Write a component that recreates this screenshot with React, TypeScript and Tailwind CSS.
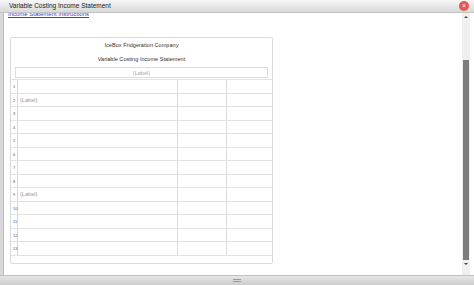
const rows = Array.from({ length: 13 }, (_, i) => ({
  n: i + 1,
  label: i === 1 || i === 8 ? "(Label)" : "",
}));

function Row({ n, label }: { n: number; label: string }) {
  return (
    <div className="flex h-[13.5px] border-b border-[#e2e2e2]">
      <div className="w-[7px] border-r border-[#d6d6d6] text-[4px] leading-[13px] text-[#555] pl-[2px]">{n}</div>
      <div className="w-[160px] border-r border-[#dcdcdc] text-[5.6px] leading-[13px] text-[#9a9a9a] pl-[2px]">{label}</div>
      <div className="w-[49px] border-r border-[#dcdcdc]"></div>
      <div className="w-[46px]"></div>
    </div>
  );
}

export default function App() {
  return (
    <div className="w-[474px] h-[285px] flex flex-col bg-white overflow-hidden font-['Liberation_Sans',Arial,sans-serif]">
      <div className="relative z-10 h-[13px] flex items-center justify-between bg-gradient-to-b from-[#f7f7f7] to-[#d9d9d9] border-b border-[#c4c4c4] pl-[9px] pr-[5px]">
        <span className="text-[6.5px] text-[#222]">Variable Costing Income Statement</span>
        <span className="w-[10px] h-[10px] rounded-full bg-[#e25a4c] text-white text-[7px] leading-[10px] text-center">×</span>
      </div>
      <div className="flex-1 flex min-h-0">
        <div className="w-[4px] bg-[#d8d8d8] border-r border-[#bdbdbd]"></div>
        <div className="flex-1 overflow-hidden">
          <div className="-mt-[3px] pl-[4px] text-[6px] leading-[8px]">
            <a href="#" className="text-[#3344cc] underline">Income Statement Instructions</a>
          </div>
          <div className="mt-[19px] ml-[6px] w-[263px] h-[227px] border border-[#dadada] rounded-[2px] bg-white">
            <div className="text-center text-[5.6px] text-[#333] leading-[8px] pt-[3px]">IceBox Fridgeration Company</div>
            <div className="text-center text-[5.6px] text-[#333] leading-[8px] mt-[6px]">Variable Costing Income Statement</div>
            <div className="mx-[4px] mt-[4px] h-[11px] border border-[#dddddd] text-center text-[5.6px] leading-[10px] text-[#aaa]">(Label)</div>
            <div className="mt-[1px] border-t border-[#e2e2e2] w-[262px]">
              {rows.map((r) => (
                <Row key={r.n} n={r.n} label={r.label} />
              ))}
            </div>
          </div>
        </div>
        <div className="w-[8px] flex flex-col bg-[#f0f0f0] mr-[4px]">
          <div className="h-[8px] flex items-center justify-center">
            <div className="w-0 h-0 border-l-[2px] border-r-[2px] border-b-[2px] border-l-transparent border-r-transparent border-b-[#444]"></div>
          </div>
          <div className="h-[39px]"></div>
          <div className="h-[200px] bg-[#7d7d7d] mx-[1px]"></div>
          <div className="h-[8px] flex items-center justify-center">
            <div className="w-0 h-0 border-l-[2px] border-r-[2px] border-t-[2px] border-l-transparent border-r-transparent border-t-[#444]"></div>
          </div>
        </div>
      </div>
      <div className="h-[10px] flex items-center justify-center bg-gradient-to-b from-[#e6e6e6] to-[#cccccc] border-t border-[#c0c0c0]">
        <div className="w-[8px] h-[3px] border-y border-[#9a9a9a]"></div>
      </div>
    </div>
  );
}
